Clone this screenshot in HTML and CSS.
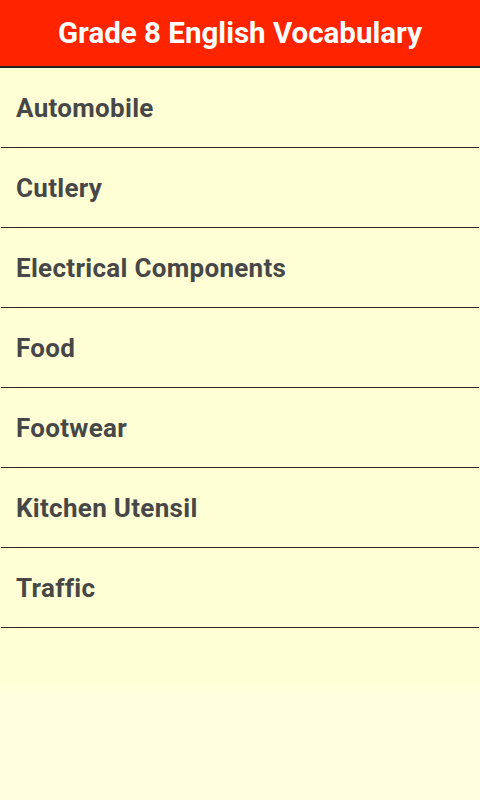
FILE: index.html
```html
<!DOCTYPE html>
<html lang="en">
<head>
    <meta charset="UTF-8">
    <meta name="viewport" content="width=device-width, initial-scale=1.0">
    <title>Grade 8 English Vocabulary</title>
    <link rel="stylesheet" href="styles.css">
</head>
<body>
    <div id="app">
        <header class="title-bar">
            <h1>Grade 8 English Vocabulary</h1>
        </header>
        <ul class="topics">
            <li><a href="#">Automobile</a></li>
            <li><a href="#">Cutlery</a></li>
            <li><a href="#">Electrical Components</a></li>
            <li><a href="#">Food</a></li>
            <li><a href="#">Footwear</a></li>
            <li><a href="#">Kitchen Utensil</a></li>
            <li><a href="#">Traffic</a></li>
        </ul>
    </div>
</body>
</html>
```

FILE: styles.css
```css
html, body {
    margin: 0;
    padding: 0;
    height: 100%;
}
body {
    background: linear-gradient(#ffffd6 0, #ffffd6 680px, #ffffe0 700px);
    font-family: Roboto, "Liberation Sans", sans-serif;
}

/* title */
.title-bar {
    background-color: #ff2400;
    height: 66px;
    border-bottom: 2px solid #222;
    display: flex;
    align-items: center;
    justify-content: center;
}
.title-bar h1 {
    margin: 0;
    color: #fff;
    font-size: 29.5px;
    font-weight: bold;
}

/* list */
.topics {
    list-style: none;
    margin: 0;
    padding: 0 1px;
}
.topics li {
    height: 79px;
    border-bottom: 1px solid #2a2a22;
    display: flex;
    align-items: center;
}
.topics li a {
    padding-left: 15px;
    color: #474747;
    font-size: 26px;
    font-weight: bold;
    letter-spacing: 0.3px;
    text-decoration: none;
}
```
